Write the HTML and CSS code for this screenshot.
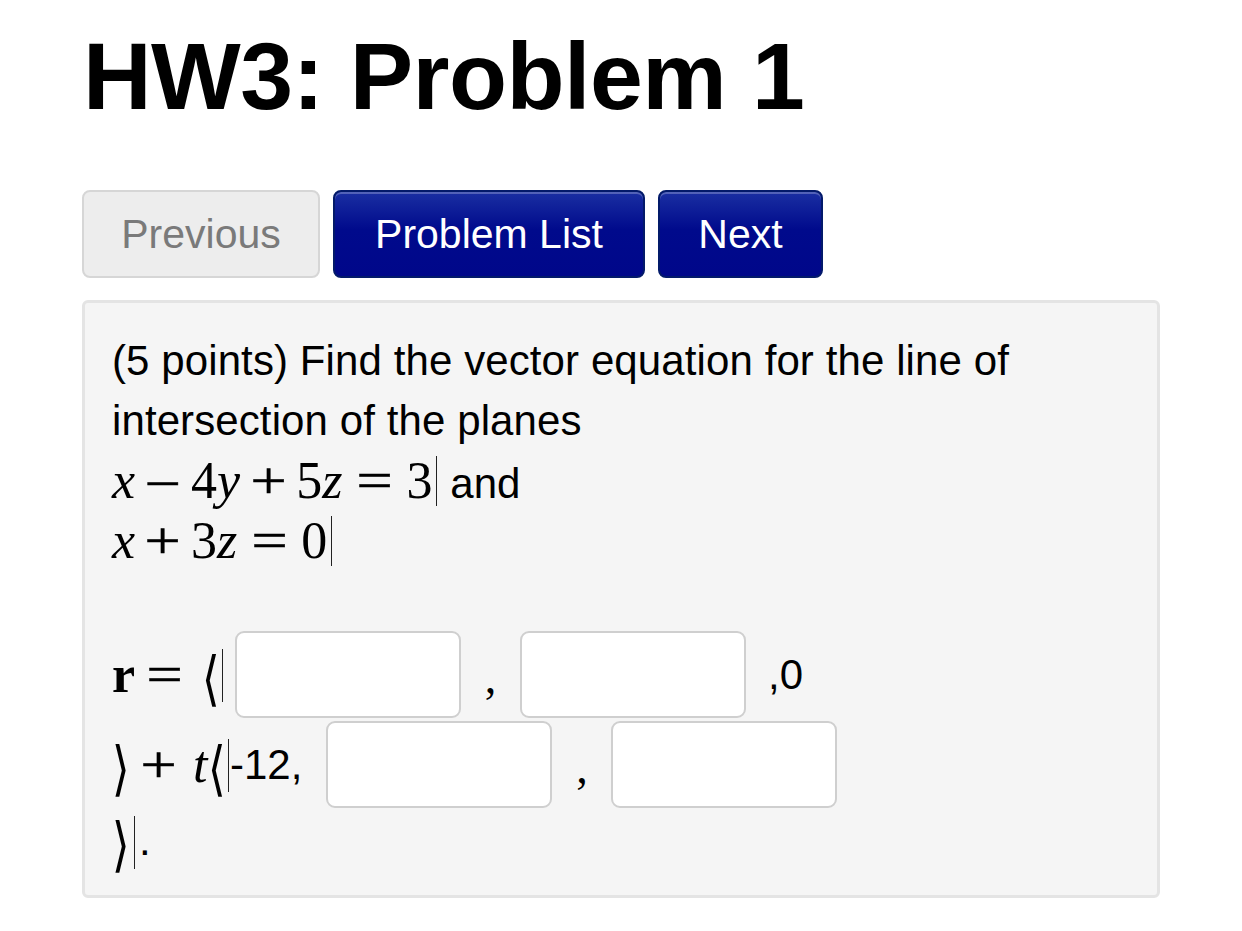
FILE: index.html
```html
<!DOCTYPE html>
<html>
<head>
<meta charset="utf-8">
<link rel="stylesheet" href="styles.css">
</head>
<body>
<div class="page">
  <h1 class="title">HW3: Problem 1</h1>
  <div class="nav">
    <span class="btn btn-disabled">Previous</span>
    <span class="btn btn-primary btn-list">Problem List</span>
    <span class="btn btn-primary btn-next">Next</span>
  </div>
  <div class="panel">
    <div class="problem">
      <div class="line">(5 points) Find the vector equation for the line of</div>
      <div class="line">intersection of the planes</div>
      <div class="line"><span class="math"><i>x</i><span class="op"><span class="glyph glyph-minus">−</span></span>4<i>y</i><span class="op"><span class="glyph">+</span></span>5<i>z</i><span class="op op-rel"><span class="glyph">=</span></span>3</span><span class="bar"></span> and</div>
      <div class="line"><span class="math"><i>x</i><span class="op"><span class="glyph">+</span></span>3<i>z</i><span class="op op-rel"><span class="glyph">=</span></span>0</span><span class="bar"></span></div>
    </div>
    <div class="answer">
      <div class="row">
        <span class="math"><b>r</b><span class="op op-eq"><span class="glyph">=</span></span></span><span class="delim delim-open">⟨</span><span class="rbar rbar-first"></span>
        <span class="input"></span>
        <span class="comma">,</span>
        <span class="input"></span>
        <span class="txt after">,0</span>
      </div>
      <div class="row">
        <span class="delim">⟩</span><span class="math"><span class="op op-plus"><span class="glyph">+</span></span><i class="tvar">t</i></span><span class="delim delim-t">⟨</span><span class="rbar rbar-second"></span><span class="txt minus">-12,</span>
        <span class="input"></span>
        <span class="comma">,</span>
        <span class="input"></span>
      </div>
      <div class="row last">
        <span class="delim">⟩</span><span class="rbar rbar-third"></span><span class="txt">.</span>
      </div>
    </div>
  </div>
</div>
</body>
</html>
```

FILE: styles.css
```css
html, body {
  margin: 0;
  padding: 0;
  background: #ffffff;
}
.page {
  padding: 24px 82px 0 82px;
  font-family: "Liberation Sans", Arial, Helvetica, sans-serif;
  color: #000;
}
.title {
  margin: 0;
  font-size: 95px;
  line-height: 104px;
  font-weight: bold;
  letter-spacing: -0.5px;
  padding-left: 1px;
}
.nav {
  display: flex;
  gap: 13px;
  margin-top: 62px;
}
.btn {
  display: flex;
  align-items: center;
  justify-content: center;
  height: 88px;
  box-sizing: border-box;
  font-size: 41px;
  border-radius: 8px;
}
.btn-disabled {
  width: 238px;
  background: #ededed;
  border: 2px solid #d6d6d6;
  color: #7a7a7a;
}
.btn-primary {
  background: linear-gradient(#1a2fa2, #000a8c 45%, #00078a);
  border: 2px solid #031a6a;
  color: #ffffff;
  box-shadow: inset 0 2px 0 rgba(255,255,255,0.25);
}
.btn-list { width: 312px; }
.btn-next { width: 165px; }
.panel {
  margin-top: 22px;
  width: 1078px;
  height: 598px;
  box-sizing: border-box;
  background: #f5f5f5;
  border: 3px solid #e4e4e4;
  border-radius: 6px;
  padding: 28px 27px 0 27px;
}
.line {
  font-size: 42px;
  line-height: 60px;
  height: 60px;
  white-space: nowrap;
  letter-spacing: 0.1px;
}
.math {
  font-family: "Liberation Serif", "Times New Roman", serif;
  font-size: 52px;
  letter-spacing: 0;
}
.math i { font-style: italic; }
.math b { font-weight: bold; }
.op {
  display: inline-block;
  width: 56px;
  text-align: center;
}
.op-rel { width: 64px; }
.op-eq { width: 60px; }
.op-plus { width: 63px; }
.glyph {
  display: inline-block;
  transform: scaleX(1.25);
  -webkit-text-stroke: 0.4px #000;
}
.glyph-minus {
  transform: translateY(3px) scaleX(1.25);
}
.bar {
  display: inline-block;
  width: 1px;
  height: 50px;
  background: #222;
  vertical-align: -8px;
  margin-left: 4px;
  margin-right: 1px;
}
.answer {
  margin-top: 60px;
}
.row {
  display: flex;
  align-items: center;
  height: 87px;
  margin-bottom: 3px;
  white-space: nowrap;
}
.row.last {
  height: 60px;
  margin-top: 2px;
}
.tvar { display: inline-block; width: 15px; padding-left: 3px; }
.delim {
  display: inline-block;
  font-family: "DejaVu Sans", sans-serif;
  font-size: 44px;
  line-height: 1;
  transform: scale(1.05, 1.35);
  padding-top: 6px;
  width: 15px;
  text-align: center;
}
.delim-open { margin-left: 7px; }
.delim-t { margin-left: 0; }
.rbar {
  display: inline-block;
  width: 1px;
  height: 53px;
  background: #222;
  margin-top: 2px;
}
.rbar-first { margin-left: 5px; margin-right: 12px; }
.rbar-second { margin-left: 5px; margin-right: 1px; }
.rbar-third { margin-left: 7px; margin-right: 4px; }
.input {
  display: inline-block;
  width: 226px;
  height: 87px;
  box-sizing: border-box;
  background: #fff;
  border: 2px solid #cfcfcf;
  border-radius: 9px;
}
.comma {
  font-family: "Liberation Serif", "Times New Roman", serif;
  font-size: 46px;
  width: 59px;
  text-align: center;
  padding-top: 6px;
}
.txt {
  font-size: 42px;
}
.txt.after { margin-left: 22px; }
.txt.minus { margin-right: 24px; }
```
